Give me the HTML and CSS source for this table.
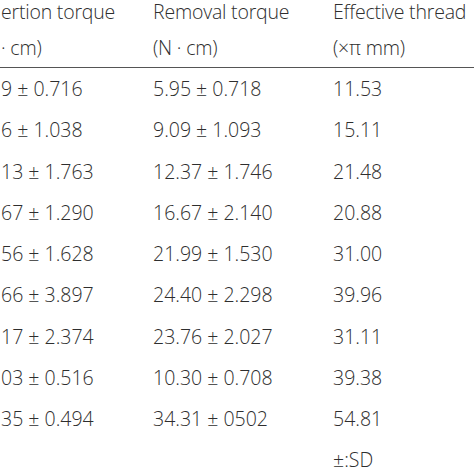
FILE: index.html
```html
<!DOCTYPE html>
<html>
<head>
<meta charset="utf-8">
<link rel="stylesheet" href="styles.css">
</head>
<body>
<div class="table">
  <div class="head">
    <div class="cell c1">ertion torque</div>
    <div class="cell c2">Removal torque</div>
    <div class="cell c3">Effective thread</div>
    <div class="cell c1 sub">· cm)</div>
    <div class="cell c2 sub">(N · cm)</div>
    <div class="cell c3 sub">(×π mm)</div>
  </div>
  <div class="body">
    <div class="cell c1">9 ± 0.716</div><div class="cell c2">5.95 ± 0.718</div><div class="cell c3">11.53</div>
    <div class="cell c1">6 ± 1.038</div><div class="cell c2">9.09 ± 1.093</div><div class="cell c3">15.11</div>
    <div class="cell c1">13 ± 1.763</div><div class="cell c2">12.37 ± 1.746</div><div class="cell c3">21.48</div>
    <div class="cell c1">67 ± 1.290</div><div class="cell c2">16.67 ± 2.140</div><div class="cell c3">20.88</div>
    <div class="cell c1">56 ± 1.628</div><div class="cell c2">21.99 ± 1.530</div><div class="cell c3">31.00</div>
    <div class="cell c1">66 ± 3.897</div><div class="cell c2">24.40 ± 2.298</div><div class="cell c3">39.96</div>
    <div class="cell c1">17 ± 2.374</div><div class="cell c2">23.76 ± 2.027</div><div class="cell c3">31.11</div>
    <div class="cell c1">03 ± 0.516</div><div class="cell c2">10.30 ± 0.708</div><div class="cell c3">39.38</div>
    <div class="cell c1">35 ± 0.494</div><div class="cell c2">34.31 ± 0502</div><div class="cell c3">54.81</div>
  </div>
  <div class="foot">±:SD</div>
</div>
</body>
</html>
```

FILE: styles.css
```css
html, body {
  margin: 0;
  padding: 0;
  background: #ffffff;
}
body {
  font-family: "Open Sans", "DejaVu Sans", sans-serif;
  font-size: 19.5px;
  font-weight: 300;
  color: #2e2e2e;
  width: 474px;
  height: 474px;
  overflow: hidden;
}
.table {
  display: flex;
  flex-direction: column;
}
.head, .body {
  display: grid;
  grid-template-columns: 153px 180px 1fr;
}
.head {
  border-bottom: 1px solid #555555;
  padding-bottom: 7px;
}
.head .cell {
  line-height: 24px;
  white-space: nowrap;
  letter-spacing: -0.2px;
}
.head .sub {
  margin-top: 12px;
}
.c1 {
  padding-left: 1px;
}
.body .cell {
  line-height: 41.3px;
  white-space: nowrap;
}
.foot {
  padding-left: 333px;
  line-height: 40px;
}
```
